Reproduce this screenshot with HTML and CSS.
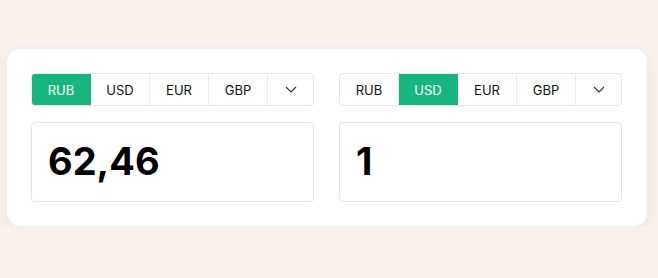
FILE: index.html
```html
<!DOCTYPE html>
<html>
<head>
    <meta charset="utf-8">
    <title>Converter</title>
    <link rel="stylesheet" href="styles.css">
</head>
<body>

<div class="converter">
    <div class="side">
        <div class="currencies">
            <span class="cur active">RUB</span>
            <span class="cur">USD</span>
            <span class="cur">EUR</span>
            <span class="cur">GBP</span>
            <span class="cur more">
                <svg width="12" height="7" viewBox="0 0 12 7"><path d="M1 1l5 5 5-5" fill="none" stroke="#333" stroke-width="1.1"/></svg>
            </span>
        </div>
        <div class="amount">62,46</div>
    </div>
    <div class="side">
        <div class="currencies">
            <span class="cur">RUB</span>
            <span class="cur active">USD</span>
            <span class="cur">EUR</span>
            <span class="cur">GBP</span>
            <span class="cur more">
                <svg width="12" height="7" viewBox="0 0 12 7"><path d="M1 1l5 5 5-5" fill="none" stroke="#333" stroke-width="1.1"/></svg>
            </span>
        </div>
        <div class="amount">1</div>
    </div>
</div>

</body>
</html>
```

FILE: styles.css
```css
* {
    box-sizing: border-box;
}
body {
    margin: 0;
    padding: 49px 0 0 7px;
    background: #f8f0eb;
    font-family: Inter, "Liberation Sans", sans-serif;
}
.converter {
    width: 640px;
    display: grid;
    grid-template-columns: 283px 283px;
    gap: 25px;
    padding: 24px;
    background: #fff;
    border-radius: 13px;
    box-shadow: 0 5px 14px rgba(120, 90, 70, 0.08);
}
.side {
    min-width: 0;
}
.currencies {
    display: flex;
    height: 33px;
    border: 1px solid #e6e6e6;
    border-radius: 4px;
    overflow: hidden;
}
.cur {
    width: 59px;
    flex: none;
    display: flex;
    align-items: center;
    justify-content: center;
    font-size: 13px;
    color: #111;
    border-right: 1px solid #ededed;
}
.cur.active {
    background: #17b67e;
    color: #fff;
    border-right-color: #17b67e;
}
.cur.more {
    flex: 1;
    width: auto;
    border-right: 0;
}
.amount {
    margin-top: 16px;
    height: 80px;
    border: 1px solid #e4e4e4;
    border-radius: 4px;
    padding: 15px 0 0 16px;
    font-family: Inter, "Liberation Sans", sans-serif;
    font-weight: bold;
    font-size: 38px;
    line-height: 46px;
    color: #000;
}
```
